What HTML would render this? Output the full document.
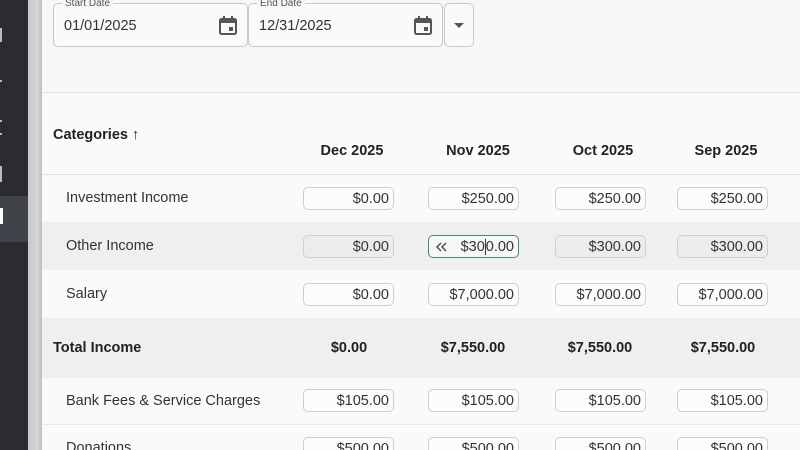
<!DOCTYPE html>
<html><head><style>
*{box-sizing:border-box;margin:0;padding:0}
html,body{width:800px;height:450px;overflow:hidden}
body{background:#f7f7f5;font-family:"Liberation Sans",sans-serif;color:#222;position:relative}
.sb{position:absolute;left:0;top:0;width:28px;height:450px;background:#2d2b2f}
.sbh{position:absolute;left:0;top:196px;width:28px;height:46px;background:#41434a}
.mk{position:absolute;left:0;width:2px;background:#bbb}
.strip{position:absolute;left:28px;top:0;width:14px;height:450px;background:linear-gradient(90deg,#c9c9c9,#d6d6d6 70%,#bdbdbd)}
.fld{position:absolute;top:3px;height:44px;border:1px solid #c8c8c8;border-radius:5px;background:#fafaf9}
.fld .lb{position:absolute;top:-5px;left:8px;background:#f7f7f5;padding:0 3px;font-size:10px;line-height:10px;color:#555}
.fld .v{position:absolute;left:10px;top:14px;font-size:14.5px;color:#333}
.cal{position:absolute;right:10px;top:11px;width:18px;height:20px}
.card{position:absolute;left:42px;top:92px;width:758px;height:358px;background:#fafaf9;border-top:1px solid #e6e6e4}
.row{position:absolute;left:42px;width:758px}
.lbl{position:absolute;left:24px;font-size:14.5px;color:#333}
.in{position:absolute;width:91px;height:23px;border:1px solid #cfcfcf;border-radius:5px;background:#fcfcfc;font-size:14.5px;text-align:right;padding:3px 4px 0 0;color:#333}
.tot{position:absolute;font-weight:bold;font-size:14.5px;width:120px;text-align:center}
.hd{position:absolute;top:143px;font-weight:bold;font-size:14.5px;width:120px;text-align:center}
</style></head><body>
<div class="sb"></div><div class="sbh"></div>
<div class="mk" style="top:28px;height:14px"></div>
<div class="mk" style="top:80px;height:2px"></div>
<div class="mk" style="top:120px;height:2px"></div>
<div class="mk" style="top:133px;height:2px"></div>
<div class="mk" style="top:166px;height:16px"></div>
<div class="mk" style="top:208px;height:16px;background:#fff;width:3px"></div>
<div class="strip"></div>
<div class="fld" style="left:53px;width:195px"><span class="lb">Start Date</span><span class="v">01/01/2025</span>
<svg class="cal" viewBox="0 0 18 20"><rect x="1" y="4" width="16" height="15" rx="1.5" fill="none" stroke="#555" stroke-width="2"/><rect x="1" y="4" width="16" height="4" fill="#555"/><rect x="4" y="1" width="2" height="4" fill="#555"/><rect x="12" y="1" width="2" height="4" fill="#555"/><rect x="10" y="12" width="4" height="4" fill="#555"/></svg></div>
<div class="fld" style="left:248px;width:195px"><span class="lb">End Date</span><span class="v">12/31/2025</span>
<svg class="cal" viewBox="0 0 18 20"><rect x="1" y="4" width="16" height="15" rx="1.5" fill="none" stroke="#555" stroke-width="2"/><rect x="1" y="4" width="16" height="4" fill="#555"/><rect x="4" y="1" width="2" height="4" fill="#555"/><rect x="12" y="1" width="2" height="4" fill="#555"/><rect x="10" y="12" width="4" height="4" fill="#555"/></svg></div>
<div class="fld" style="left:444px;width:30px"><svg style="position:absolute;left:8px;top:18px" width="12" height="7"><path d="M1 1h10L6 6z" fill="#555"/></svg></div>
<div class="card"></div>
<div style="position:absolute;left:53px;top:127px;font-weight:bold;font-size:14.5px">Categories <span style="font-weight:normal">↑</span></div>
<div class="hd" style="left:292px">Dec 2025</div>
<div class="hd" style="left:418px">Nov 2025</div>
<div class="hd" style="left:543px">Oct 2025</div>
<div class="hd" style="left:666px">Sep 2025</div>
<div class="row" style="top:174px;height:1px;background:#e2e2e0"></div>

<div class="row" style="top:175px;height:47px;background:#fafaf9"><span class="lbl" style="top:15px">Investment Income</span></div>
<div class="row" style="top:222px;height:48px;background:#efefee"><span class="lbl" style="top:16px">Other Income</span></div>
<div class="row" style="top:270px;height:48px;background:#fafaf9"><span class="lbl" style="top:16px">Salary</span></div>
<div class="row" style="top:318px;height:60px;background:#efefee"><span class="lbl" style="left:11px;top:22px;font-weight:bold;color:#222">Total Income</span></div>
<div class="row" style="top:378px;height:47px;background:#fafaf9;border-bottom:1px solid #e8e8e6"><span class="lbl" style="top:15px">Bank Fees &amp; Service Charges</span></div>
<div class="row" style="top:426px;height:24px;background:#fafaf9"><span class="lbl" style="top:14px">Donations</span></div>

<div class="in" style="left:303px;top:187px">$0.00</div>
<div class="in" style="left:428px;top:187px">$250.00</div>
<div class="in" style="left:555px;top:187px">$250.00</div>
<div class="in" style="left:677px;top:187px">$250.00</div>

<div class="in" style="left:303px;top:235px;background:#ececec">$0.00</div>
<div class="in" style="left:428px;top:235px;border:1.5px solid #4a8a6a;background:#f7f7f7">
<svg style="position:absolute;left:6px;top:6px" width="12" height="10"><path d="M6 1L2 5l4 4M11 1L7 5l4 4" fill="none" stroke="#444" stroke-width="1.4"/></svg>$30<span style="border-left:1px solid #333"></span>0.00</div>
<div class="in" style="left:555px;top:235px;background:#ececec">$300.00</div>
<div class="in" style="left:677px;top:235px;background:#ececec">$300.00</div>

<div class="in" style="left:303px;top:283px">$0.00</div>
<div class="in" style="left:428px;top:283px">$7,000.00</div>
<div class="in" style="left:555px;top:283px">$7,000.00</div>
<div class="in" style="left:677px;top:283px">$7,000.00</div>

<div class="tot" style="left:289px;top:340px">$0.00</div>
<div class="tot" style="left:413px;top:340px">$7,550.00</div>
<div class="tot" style="left:540px;top:340px">$7,550.00</div>
<div class="tot" style="left:663px;top:340px">$7,550.00</div>

<div class="in" style="left:303px;top:389px">$105.00</div>
<div class="in" style="left:428px;top:389px">$105.00</div>
<div class="in" style="left:555px;top:389px">$105.00</div>
<div class="in" style="left:677px;top:389px">$105.00</div>

<div class="in" style="left:303px;top:437px">$500.00</div>
<div class="in" style="left:428px;top:437px">$500.00</div>
<div class="in" style="left:555px;top:437px">$500.00</div>
<div class="in" style="left:677px;top:437px">$500.00</div>
</body></html>
